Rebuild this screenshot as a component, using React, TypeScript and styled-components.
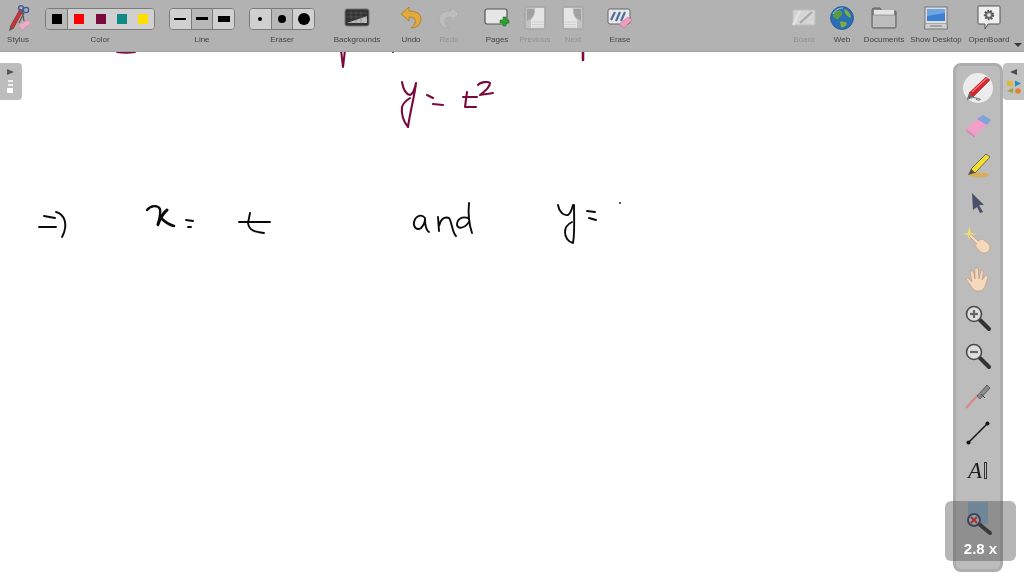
import styled, { createGlobalStyle } from "styled-components";

const GlobalStyle = createGlobalStyle`
  html, body {
    margin: 0;
    padding: 0;
    background: #fff;
    font-family: "Liberation Sans", Arial, sans-serif;
  }
`;

const colors = ["#000000", "#ff0000", "#7a0a3c", "#0f8a85", "#ffdf00"];
const lines = [
  { w: 12, h: 2 },
  { w: 12, h: 3 },
  { w: 12, h: 6 },
];
const erasers = [4, 8, 12];

function StylusIcon() {
  return (
    <svg width="28" height="30" viewBox="0 0 28 30">
      <path d="M6 24 L16 6 L19 8 L9 26 Z" fill="#c8343c" stroke="#7c2028" strokeWidth="0.6" />
      <path d="M6 24 L5 28 L9 26 Z" fill="#555" />
      <circle cx="22" cy="7" r="2.6" fill="none" stroke="#3d5a9a" strokeWidth="1.4" />
      <circle cx="17" cy="5" r="2.4" fill="none" stroke="#3d5a9a" strokeWidth="1.4" />
      <path d="M20 10 L15 20 M18 7 L20 18" stroke="#555" strokeWidth="1.2" />
      <path d="M14 22 L24 17 L27 20 L18 27 Z" fill="#eeaacb" stroke="#b88" strokeWidth="0.4" />
    </svg>
  );
}

function BackgroundsIcon() {
  return (
    <svg width="26" height="20" viewBox="0 0 26 20">
      <rect x="1" y="1" width="24" height="17" rx="2" fill="#333" stroke="#777" />
      <path d="M3 15 L23 8 V15 Z" fill="#bbb" />
      <path d="M3 5 H23 M3 9 H23 M7 3 V16 M12 3 V16 M17 3 V16" stroke="#666" strokeWidth="0.5" />
    </svg>
  );
}

function UndoIcon({ off }: { off?: boolean }) {
  return (
    <svg width="22" height="24" viewBox="0 0 22 24" style={off ? { transform: "scaleX(-1)" } : undefined}>
      <path
        d="M9 1 L1 8 L9 15 V11 C14 11 16 13 15 17 C14 20 12 21 11 22 C17 22 21 18 21 13 C21 7 15 5 9 5 Z"
        fill={off ? "#c2c2c2" : "#e2a93c"}
        stroke={off ? "#a6a6a6" : "#a87a22"}
        strokeWidth="0.8"
      />
    </svg>
  );
}

function PagesIcon() {
  return (
    <svg width="26" height="24" viewBox="0 0 26 24">
      <rect x="1" y="3" width="22" height="15" rx="2" fill="#e6e6e6" stroke="#555" strokeWidth="1.2" />
      <path d="M16 14 H19 V11 H22 V14 H25 V17 H22 V20 H19 V17 H16 Z" fill="#2ea32e" stroke="#166b16" strokeWidth="0.5" />
    </svg>
  );
}

function PageTurnIcon({ flip }: { flip?: boolean }) {
  return (
    <svg width="22" height="24" viewBox="0 0 22 24" style={flip ? { transform: "scaleX(-1)" } : undefined}>
      <rect x="1" y="1" width="20" height="22" rx="1.5" fill="#c6c6c6" stroke="#9a9a9a" />
      <path d="M11 2 H20 V22 H7 L7 14 C10 11 12 7 11 2 Z" fill="#f2f2f2" />
      <path d="M3 3 L10 3 C11 8 9 12 3 15 Z" fill="#9e9e9e" />
      <path d="M8 16 H20 M8 18.5 H20 M8 21 H20" stroke="#cfcfcf" strokeWidth="0.7" />
    </svg>
  );
}

function EraseIcon() {
  return (
    <svg width="26" height="24" viewBox="0 0 26 24">
      <rect x="1" y="3" width="22" height="15" rx="2" fill="#e8e8e8" stroke="#666" strokeWidth="1" />
      <path d="M4 14 L8 6 M9 15 L13 6 M14 15 L18 6" stroke="#4e6d9c" strokeWidth="2.2" />
      <path d="M12 18 L21 11 L25 14 L17 22 Z" fill="#ee9cc4" stroke="#b57" strokeWidth="0.4" />
    </svg>
  );
}

function BoardIcon() {
  return (
    <svg width="24" height="20" viewBox="0 0 24 20">
      <rect x="1" y="2" width="22" height="15" rx="1" fill="#dedede" stroke="#c4c4c4" />
      <path d="M8 15 L20 4" stroke="#a6a6a6" strokeWidth="2.2" />
      <path d="M1 17 L8 3" stroke="#f2f2f2" strokeWidth="2" />
    </svg>
  );
}

function WebIcon() {
  return (
    <svg width="24" height="24" viewBox="0 0 24 24">
      <circle cx="12" cy="12" r="11.5" fill="#2a6fb5" stroke="#1b4a80" strokeWidth="0.6" />
      <path d="M5 6 C8 3 12 4 12 7 C13 10 9 10 9 13 C7 14 4 12 3 10 Z" fill="#5d9c3c" />
      <path d="M14 3 C18 4 21 8 21 12 C18 11 16 9 15 7 Z M10 16 C13 15 17 16 17 18 C15 21 12 22 11 21 Z" fill="#7fae3e" />
      <path d="M3 8 C6 3 10 2 13 2" stroke="#a8d0f0" strokeWidth="1" fill="none" />
    </svg>
  );
}

function DocumentsIcon() {
  return (
    <svg width="26" height="22" viewBox="0 0 26 22">
      <path d="M1 3 Q1 1 3 1 H9 L11 4 H24 Q25 4 25 5 V20 Q25 21 24 21 H2 Q1 21 1 20 Z" fill="#8a8a8a" stroke="#5f5f5f" />
      <rect x="3" y="3" width="20" height="5" fill="#e4e4e4" />
      <path d="M1.5 8 H24.5 V20 Q24.5 20.5 24 20.5 H2 Q1.5 20.5 1.5 20 Z" fill="#bdbdbd" stroke="#6a6a6a" strokeWidth="0.5" />
    </svg>
  );
}

function DesktopIcon() {
  return (
    <svg width="24" height="24" viewBox="0 0 24 24">
      <rect x="1" y="1" width="22" height="17" fill="#dedede" stroke="#777" />
      <rect x="3" y="3" width="18" height="12" fill="#3d7fd0" />
      <path d="M3 3 H21 V7 L3 10 Z" fill="#6ea6e4" />
      <path d="M1 18 L0.5 23 H23.5 L23 18 M6 20 H18" fill="#d0d0d0" stroke="#777" />
    </svg>
  );
}

function OpenBoardIcon() {
  return (
    <svg width="24" height="26" viewBox="0 0 24 26">
      <path d="M2 1 H22 Q23 1 23 2 V18 Q23 19 22 19 H11 L8 24 V19 H2 Q1 19 1 18 V2 Q1 1 2 1 Z" fill="#f0f0f0" stroke="#555" />
      <circle cx="12" cy="10" r="4" fill="#777" stroke="#555" strokeWidth="2.4" strokeDasharray="1.6 1.2" />
      <circle cx="12" cy="10" r="1.8" fill="#eee" />
    </svg>
  );
}

function DockPen() {
  return (
    <svg width="32" height="32" viewBox="0 0 32 32">
      <circle cx="16" cy="16" r="15" fill="#ececec" />
      <path d="M7 21 L24 5 L28 8 L11 25 Z" fill="#d8232a" stroke="#8a1c20" strokeWidth="0.5" />
      <path d="M10 20 L25 6" stroke="#f2777a" strokeWidth="1.2" />
      <path d="M7 21 L5 27 L11 25 Z" fill="#666" />
      <path d="M5 28 C10 24 14 26 18 27 C19 28 16 29 14 27" fill="none" stroke="#666" strokeWidth="1" />
    </svg>
  );
}

function DockEraser() {
  return (
    <svg width="28" height="28" viewBox="0 0 28 28">
      <path d="M2 17 L14 6 L24 12 L11 24 Z" fill="#f0a0c8" />
      <path d="M13 7 L19 3 L27 8 L23 13 Z" fill="#7fa3d6" />
      <path d="M2 17 L11 24 L11 26 L2 19 Z" fill="#d585ad" />
    </svg>
  );
}

function DockMarker() {
  return (
    <svg width="28" height="28" viewBox="0 0 28 28">
      <ellipse cx="15" cy="24" rx="10" ry="2.5" fill="#e0a93c" opacity="0.8" />
      <path d="M7 18 L22 3 L26 6 L11 22 Z" fill="#f2df2e" stroke="#444" strokeWidth="0.7" />
      <path d="M7 18 L4 24 L11 22 Z" fill="#554" />
    </svg>
  );
}

function DockArrow() {
  return (
    <svg width="20" height="24" viewBox="0 0 20 24">
      <path d="M4 2 L16 14 L11 14 L15 21 L12 22 L9 16 L5 19 Z" fill="#4a5068" />
    </svg>
  );
}

function DockHand({ spark }: { spark?: boolean }) {
  return (
    <svg width="30" height="30" viewBox="0 0 30 30">
      {spark && <path d="M6 1 L8 7 L14 8 L8 9 L6 14 L5 9 L0 8 L5 7 Z" fill="#f1e36a" />}
      {spark ? (
        <path
          d="M8 8 L15 15 L19 13 L26 18 C28 22 26 27 21 27 C17 27 15 23 11 18 L14 18 L6 10 Z"
          fill="#f6d9bd"
          stroke="#b98a6e"
          strokeWidth="0.5"
        />
      ) : (
        <path
          d="M10 24 L3 14 L5 13 L9 17 L7 6 L10 6 L12 14 L12 3 L15 3 L16 14 L18 5 L20.5 6 L19 15 L23 10 L25 12 L22 21 C21 26 14 28 10 24 Z"
          fill="#f6d9bd"
          stroke="#b98a6e"
          strokeWidth="0.5"
        />
      )}
    </svg>
  );
}

function DockZoom({ sign }: { sign: "+" | "-" }) {
  return (
    <svg width="28" height="28" viewBox="0 0 28 28">
      <path d="M16 16 L25 25" stroke="#333" strokeWidth="4" strokeLinecap="round" />
      <circle cx="10" cy="10" r="7.5" fill="#ddd" stroke="#4a4a4a" strokeWidth="1.6" />
      <path d="M6 10 H14" stroke="#666" strokeWidth="2.2" />
      {sign === "+" && <path d="M10 6 V14" stroke="#666" strokeWidth="2.2" />}
    </svg>
  );
}

function DockLaser() {
  return (
    <svg width="28" height="28" viewBox="0 0 28 28">
      <path d="M2 27 L14 14" stroke="#d88a8a" strokeWidth="2.4" />
      <path d="M13 15 L23 4 L26 7 L16 18 Z" fill="#8a8a8a" stroke="#444" strokeWidth="0.7" />
      <path d="M17 13 L21 17" stroke="#444" strokeWidth="1" />
    </svg>
  );
}

function DockLine() {
  return (
    <svg width="26" height="26" viewBox="0 0 26 26">
      <path d="M3 23 L23 3" stroke="#111" strokeWidth="1.5" />
      <circle cx="3.5" cy="22.5" r="2" fill="#111" />
      <circle cx="22.5" cy="3.5" r="2" fill="#111" />
    </svg>
  );
}

function DockMagnifier() {
  return (
    <svg width="30" height="36" viewBox="0 0 30 36">
      <rect x="5" y="1" width="20" height="22" fill="#86aecb" />
      <path d="M16 23 L27 32" stroke="#2c2c2c" strokeWidth="4" strokeLinecap="round" />
      <circle cx="11" cy="19" r="6" fill="#c9d6e2" stroke="#2c3a5c" strokeWidth="2" />
      <path d="M8 16 L14 22 M14 16 L8 22" stroke="#e02020" strokeWidth="2" />
    </svg>
  );
}

function TrayIcon() {
  return (
    <svg width="16" height="14" viewBox="0 0 16 14">
      <rect x="1" y="1" width="6" height="5" fill="#e3b82e" />
      <path d="M9 0.5 L15 3.5 L9 6.5 Z" fill="#1f8fc9" />
      <path d="M1 11 L7 8 V13 Z" fill="#9aa63c" />
      <circle cx="12" cy="11" r="2.8" fill="#e5822a" />
    </svg>
  );
}

export default function App() {
  return (
    <Screen>
      <GlobalStyle />
      <Ink viewBox="0 0 1024 576">
        <g stroke="#7a0a3c" strokeWidth="2.1" fill="none" strokeLinecap="round" strokeLinejoin="round">
          <path d="M117 52 C123 53 129 53 135 52" />
          <path d="M341 50 L343 67 L345 50" />
          <path d="M583 50 V60" strokeWidth="2.6" />
          <path d="M402 82 C403 88 405 94 410 95 C413 94 415 88 416 83 C415 94 410 112 408 127 C404 122 401 115 402 107 C403 103 407 100 410 98" />
          <path d="M427 95 L433 98 M433 104 L443 105" />
          <path d="M467 92 L465 107 L476 107 M463 97 L477 97" />
          <path d="M478 85 C480 82 488 81 490 83 C490 87 484 92 480 95 C484 94 489 94 493 93" />
        </g>
        <g stroke="#0a0a0a" strokeWidth="1.9" fill="none" strokeLinecap="round" strokeLinejoin="round">
          <path d="M393 50 L393 52" />
          <path d="M44 216 L55 218 M39 227 L56 227" />
          <path d="M56 212 C64 214 69 224 62 237" />
          <path d="M147 210 C151 205 158 205 160 209 C161 214 159 220 158 225" strokeWidth="2.4" />
          <path d="M167 210 C163 213 160 219 158 224" strokeWidth="3" />
          <path d="M161 218 C165 222 170 225 174 226" strokeWidth="2.6" />
          <path d="M186 220 L193 221 M188 227 L191 227" />
          <path d="M250 213 L248 223 C249 231 256 232 264 233" />
          <path d="M239 222 L270 222" />
          <path d="M425 218 C422 214 416 215 414 222 C413 227 417 231 421 228 C424 225 425 222 425 219 C425 224 426 230 429 232" />
          <path d="M438 217 L439 231 M439 226 C440 220 444 216 449 218 C452 222 452 232 456 236" />
          <path d="M468 218 C462 216 457 219 457 225 C458 229 464 229 469 222" />
          <path d="M469 203 C468 213 469 224 472 233" />
          <path d="M558 205 C559 211 563 216 568 215 C571 213 572 209 573 205" />
          <path d="M574 205 C574 218 575 232 573 243 C568 242 565 237 565 232 C565 228 568 224 572 222" />
          <path d="M587 211 L595 212 M589 218 L596 220" />
          <circle cx="620" cy="203" r="0.9" fill="#0a0a0a" stroke="none" />
        </g>
      </Ink>

      <Toolbar>
        <Item $w={36}>
          <IconSlot><StylusIcon /></IconSlot>
          <Label>Stylus</Label>
        </Item>
        <Item $w={110} $ml={9}>
          <IconSlot>
            <Group>
              {colors.map((c, i) => (
                <Seg key={c} $active={i === 0} $line={i === 0}>
                  <Swatch $color={c} />
                </Seg>
              ))}
            </Group>
          </IconSlot>
          <Label>Color</Label>
        </Item>
        <Item $w={66} $ml={14}>
          <IconSlot>
            <Group>
              {lines.map((l, i) => (
                <Seg key={l.h} $active={i === 1} $line={i < 2}>
                  <Dash $w={l.w} $h={l.h} />
                </Seg>
              ))}
            </Group>
          </IconSlot>
          <Label>Line</Label>
        </Item>
        <Item $w={66} $ml={14}>
          <IconSlot>
            <Group>
              {erasers.map((s, i) => (
                <Seg key={s} $active={i === 1} $line={i < 2}>
                  <Dot $size={s} />
                </Seg>
              ))}
            </Group>
          </IconSlot>
          <Label>Eraser</Label>
        </Item>
        <Item $w={56} $ml={14}>
          <IconSlot><BackgroundsIcon /></IconSlot>
          <Label>Backgrounds</Label>
        </Item>
        <Item $w={36} $ml={8}>
          <IconSlot><UndoIcon /></IconSlot>
          <Label>Undo</Label>
        </Item>
        <Item $w={36} $ml={2}>
          <IconSlot $dim><UndoIcon off /></IconSlot>
          <Label $dim>Redo</Label>
        </Item>
        <Item $w={38} $ml={11}>
          <IconSlot><PagesIcon /></IconSlot>
          <Label>Pages</Label>
        </Item>
        <Item $w={38}>
          <IconSlot $dim><PageTurnIcon /></IconSlot>
          <Label $dim>Previous</Label>
        </Item>
        <Item $w={38}>
          <IconSlot $dim><PageTurnIcon flip /></IconSlot>
          <Label $dim>Next</Label>
        </Item>
        <Item $w={40} $ml={8}>
          <IconSlot><EraseIcon /></IconSlot>
          <Label>Erase</Label>
        </Item>
        <Spacer />
        <Item $w={38}>
          <IconSlot $dim><BoardIcon /></IconSlot>
          <Label $dim>Board</Label>
        </Item>
        <Item $w={38}>
          <IconSlot><WebIcon /></IconSlot>
          <Label>Web</Label>
        </Item>
        <Item $w={46}>
          <IconSlot><DocumentsIcon /></IconSlot>
          <Label>Documents</Label>
        </Item>
        <Item $w={56} $ml={1}>
          <IconSlot><DesktopIcon /></IconSlot>
          <Label>Show Desktop</Label>
        </Item>
        <Item $w={46} $ml={2}>
          <IconSlot><OpenBoardIcon /></IconSlot>
          <Label>OpenBoard</Label>
        </Item>
        <MoreArrow />
      </Toolbar>

      <LeftTab>
        <PlayGlyph />
        <PageStack>
          <PageLine />
          <PageLine />
          <PageBox />
        </PageStack>
      </LeftTab>

      <RightTab>
        <BackGlyph />
        <TrayIcon />
      </RightTab>

      <Dock>
        <DockSlot><DockPen /></DockSlot>
        <DockSlot><DockEraser /></DockSlot>
        <DockSlot><DockMarker /></DockSlot>
        <DockSlot><DockArrow /></DockSlot>
        <DockSlot><DockHand spark /></DockSlot>
        <DockSlot><DockHand /></DockSlot>
        <DockSlot><DockZoom sign="+" /></DockSlot>
        <DockSlot><DockZoom sign="-" /></DockSlot>
        <DockSlot><DockLaser /></DockSlot>
        <DockSlot><DockLine /></DockSlot>
        <DockSlot><TextTool>A<Caret /></TextTool></DockSlot>
        <DockSlot $tall><DockMagnifier /></DockSlot>
      </Dock>

      <ZoomBadge>2.8 x</ZoomBadge>
    </Screen>
  );
}

const Screen = styled.div`
  position: relative;
  width: 1024px;
  height: 576px;
  overflow: hidden;
  background: #fff;
  filter: blur(0.35px);
`;
const Ink = styled.svg`
  position: absolute;
  inset: 0;
  width: 1024px;
  height: 576px;
`;
const Toolbar = styled.div`
  position: relative;
  display: flex;
  align-items: flex-start;
  height: 52px;
  box-sizing: border-box;
  background: #b2b2b2;
  border-bottom: 1px solid #a2a2a2;
`;
const Item = styled.div<{ $w: number; $ml?: number }>`
  display: flex;
  flex-direction: column;
  align-items: center;
  flex: none;
  width: ${(p) => p.$w}px;
  margin-left: ${(p) => p.$ml || 0}px;
`;
const IconSlot = styled.div<{ $dim?: boolean }>`
  display: flex;
  align-items: center;
  justify-content: center;
  width: 100%;
  height: 36px;
  opacity: ${(p) => (p.$dim ? 0.8 : 1)};
`;
const Label = styled.div<{ $dim?: boolean }>`
  font-size: 8px;
  line-height: 10px;
  margin-top: -1px;
  white-space: nowrap;
  color: ${(p) => (p.$dim ? "#929292" : "#444444")};
`;
const Spacer = styled.div`
  flex: 1;
`;
const Group = styled.div`
  display: flex;
  width: 100%;
  height: 22px;
  margin-top: 1px;
  box-sizing: border-box;
  border: 1px solid #7a7a7a;
  border-radius: 4px;
  background: #cfcfcf;
  overflow: hidden;
`;
const Seg = styled.div<{ $active?: boolean; $line?: boolean }>`
  flex: 1;
  display: flex;
  align-items: center;
  justify-content: center;
  background: ${(p) => (p.$active ? "#b8b8b8" : "#d0d0d0")};
  border-right: ${(p) => (p.$line ? "1px solid #7a7a7a" : "none")};
`;
const Swatch = styled.div<{ $color: string }>`
  width: 10px;
  height: 10px;
  background: ${(p) => p.$color};
`;
const Dash = styled.div<{ $w: number; $h: number }>`
  width: ${(p) => p.$w}px;
  height: ${(p) => p.$h}px;
  background: #000;
`;
const Dot = styled.div<{ $size: number }>`
  width: ${(p) => p.$size}px;
  height: ${(p) => p.$size}px;
  border-radius: 50%;
  background: #000;
`;
const MoreArrow = styled.div`
  flex: none;
  align-self: flex-end;
  width: 0;
  height: 0;
  margin: 0 2px 4px 2px;
  border-left: 4px solid transparent;
  border-right: 4px solid transparent;
  border-top: 4px solid #3c3c3c;
`;
const LeftTab = styled.div`
  position: absolute;
  left: 0;
  top: 63px;
  width: 22px;
  height: 37px;
  display: flex;
  flex-direction: column;
  align-items: center;
  padding: 6px 2px 0 0;
  box-sizing: border-box;
  gap: 5px;
  background: #bdbdbd;
  border-radius: 0 4px 4px 0;
`;
const PlayGlyph = styled.div`
  width: 0;
  height: 0;
  border-left: 7px solid #5a5a5a;
  border-top: 3.5px solid transparent;
  border-bottom: 3.5px solid transparent;
`;
const PageStack = styled.div`
  display: flex;
  flex-direction: column;
  align-items: center;
  gap: 2px;
`;
const PageLine = styled.div`
  width: 5px;
  height: 2px;
  background: #eee;
`;
const PageBox = styled.div`
  width: 6px;
  height: 5px;
  background: #fff;
`;
const RightTab = styled.div`
  position: absolute;
  right: 0;
  top: 63px;
  width: 21px;
  height: 37px;
  display: flex;
  flex-direction: column;
  align-items: center;
  gap: 5px;
  padding-top: 6px;
  box-sizing: border-box;
  background: #c2c2c2;
  border-radius: 4px 0 0 4px;
`;
const BackGlyph = styled.div`
  width: 0;
  height: 0;
  border-right: 7px solid #4c4c4c;
  border-top: 3.5px solid transparent;
  border-bottom: 3.5px solid transparent;
`;
const Dock = styled.div`
  position: absolute;
  left: 953px;
  top: 63px;
  width: 50px;
  height: 509px;
  box-sizing: border-box;
  display: flex;
  flex-direction: column;
  align-items: center;
  padding-top: 3px;
  background: #bcbcbc;
  border: 3px solid #adadad;
  border-radius: 8px;
`;
const DockSlot = styled.div<{ $tall?: boolean }>`
  flex: none;
  display: flex;
  align-items: center;
  justify-content: center;
  height: ${(p) => (p.$tall ? 42 : 38.3)}px;
  margin-top: ${(p) => (p.$tall ? 8 : 0)}px;
`;
const TextTool = styled.div`
  position: relative;
  font-family: "Liberation Serif", "Times New Roman", serif;
  font-style: italic;
  font-size: 23px;
  line-height: 24px;
  color: #1e1e1e;
  padding-right: 6px;
`;
const Caret = styled.span`
  position: absolute;
  right: 1px;
  top: 3px;
  width: 3px;
  height: 17px;
  border: 1px solid #333;
  box-sizing: border-box;
`;
const ZoomBadge = styled.div`
  position: absolute;
  left: 945px;
  top: 501px;
  width: 71px;
  height: 60px;
  box-sizing: border-box;
  padding-bottom: 3px;
  display: flex;
  align-items: flex-end;
  justify-content: center;
  background: rgba(80, 80, 80, 0.42);
  border-radius: 6px;
  color: #fff;
  font-weight: bold;
  font-size: 15px;
  line-height: 18px;
`;
